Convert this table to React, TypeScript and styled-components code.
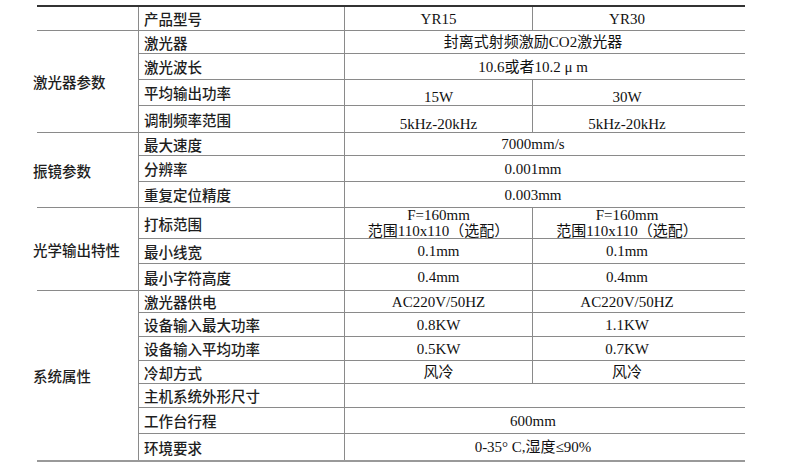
import styled, { createGlobalStyle } from "styled-components";

const GlobalStyle = createGlobalStyle`
  html, body {
    margin: 0;
    padding: 0;
    background: #ffffff;
  }
  body {
    font-family: "Liberation Serif", "Noto Sans CJK SC", serif;
    color: #1c1c1c;
  }
`;

type Value = string | string[];
interface SpecRow {
  label: string;
  values: Value[];
  low?: boolean;
}
interface SpecGroup {
  name: string;
  rows: SpecRow[];
}

// row heights measured from the sheet (line to line, minus the 1px line)
const ROW_HEIGHTS = [23, 22, 25, 25, 26, 22, 25, 25, 30, 24, 26, 21, 23, 23, 22, 23, 25, 26];

const GROUPS: SpecGroup[] = [
  { name: "", rows: [{ label: "产品型号", values: ["YR15", "YR30"] }] },
  {
    name: "激光器参数",
    rows: [
      { label: "激光器", values: ["封离式射频激励CO2激光器"] },
      { label: "激光波长", values: ["10.6或者10.2 μ m"] },
      { label: "平均输出功率", values: ["15W", "30W"], low: true },
      { label: "调制频率范围", values: ["5kHz-20kHz", "5kHz-20kHz"], low: true },
    ],
  },
  {
    name: "振镜参数",
    rows: [
      { label: "最大速度", values: ["7000mm/s"] },
      { label: "分辨率", values: ["0.001mm"] },
      { label: "重复定位精度", values: ["0.003mm"] },
    ],
  },
  {
    name: "光学输出特性",
    rows: [
      {
        label: "打标范围",
        values: [
          ["F=160mm", "范围110x110（选配）"],
          ["F=160mm", "范围110x110（选配）"],
        ],
      },
      { label: "最小线宽", values: ["0.1mm", "0.1mm"] },
      { label: "最小字符高度", values: ["0.4mm", "0.4mm"] },
    ],
  },
  {
    name: "系统属性",
    rows: [
      { label: "激光器供电", values: ["AC220V/50HZ", "AC220V/50HZ"] },
      { label: "设备输入最大功率", values: ["0.8KW", "1.1KW"] },
      { label: "设备输入平均功率", values: ["0.5KW", "0.7KW"] },
      { label: "冷却方式", values: ["风冷", "风冷"] },
      { label: "主机系统外形尺寸", values: [""] },
      { label: "工作台行程", values: ["600mm"] },
      { label: "环境要求", values: ["0-35° C,湿度≤90%"] },
    ],
  },
];

const Page = styled.div`
  padding: 5px 0 0 37px;
`;

const Sheet = styled.div`
  display: grid;
  width: 708px;
  grid-template-columns: 101px 205px 187px 212px;
  grid-template-rows: ${ROW_HEIGHTS.map((h) => `${h}px`).join(" ")};
  gap: 1px;
  background: #8a8a8a;
  border-top: 2px solid #333;
  border-bottom: 2px solid #999;
`;

const GroupCell = styled.div<{ $start: number; $span: number }>`
  grid-column: 1;
  grid-row: ${(p) => `${p.$start} / span ${p.$span}`};
  background: #fff;
  display: flex;
  align-items: center;
  font-family: "Noto Sans CJK SC", sans-serif;
  font-size: 14.5px;
  font-weight: 500;
  text-indent: -4px;
  color: #1e1e1e;
`;

const LabelCell = styled.div<{ $row: number }>`
  grid-column: 2;
  grid-row: ${(p) => p.$row};
  background: #fff;
  display: flex;
  align-items: center;
  padding-left: 5px;
  font-family: "Noto Sans CJK SC", sans-serif;
  font-size: 14.5px;
  font-weight: 500;
  color: #1e1e1e;
`;

const ValueCell = styled.div<{ $row: number; $col: string; $right: number; $low?: boolean }>`
  grid-column: ${(p) => p.$col};
  grid-row: ${(p) => p.$row};
  background: #fff;
  display: flex;
  flex-direction: column;
  align-items: center;
  justify-content: center;
  padding-right: ${(p) => p.$right}px;
  padding-top: ${(p) => (p.$low ? 9 : 0)}px;
  font-family: "Liberation Serif", "Noto Sans CJK SC", serif;
  font-size: 15px;
  line-height: 16px;
  color: #111;
  white-space: nowrap;
`;

function renderValue(v: Value) {
  if (Array.isArray(v)) return v.map((line) => <span key={line}>{line}</span>);
  return v;
}

export default function App() {
  let row = 1;
  const cells: JSX.Element[] = [];

  GROUPS.forEach((group, gi) => {
    cells.push(
      <GroupCell key={`g-${gi}`} $start={row} $span={group.rows.length}>
        {group.name}
      </GroupCell>
    );
    group.rows.forEach((r) => {
      cells.push(
        <LabelCell key={`l-${r.label}`} $row={row}>
          {r.label}
        </LabelCell>
      );
      if (r.values.length === 1) {
        cells.push(
          <ValueCell key={`v-${r.label}`} $row={row} $col="3 / span 2" $right={24}>
            {renderValue(r.values[0])}
          </ValueCell>
        );
      } else {
        cells.push(
          <ValueCell key={`a-${r.label}`} $row={row} $col="3" $right={0} $low={r.low}>
            {renderValue(r.values[0])}
          </ValueCell>,
          <ValueCell key={`b-${r.label}`} $row={row} $col="4" $right={24} $low={r.low}>
            {renderValue(r.values[1])}
          </ValueCell>
        );
      }
      row += 1;
    });
  });

  return (
    <Page>
      <GlobalStyle />
      <Sheet>{cells}</Sheet>
    </Page>
  );
}
